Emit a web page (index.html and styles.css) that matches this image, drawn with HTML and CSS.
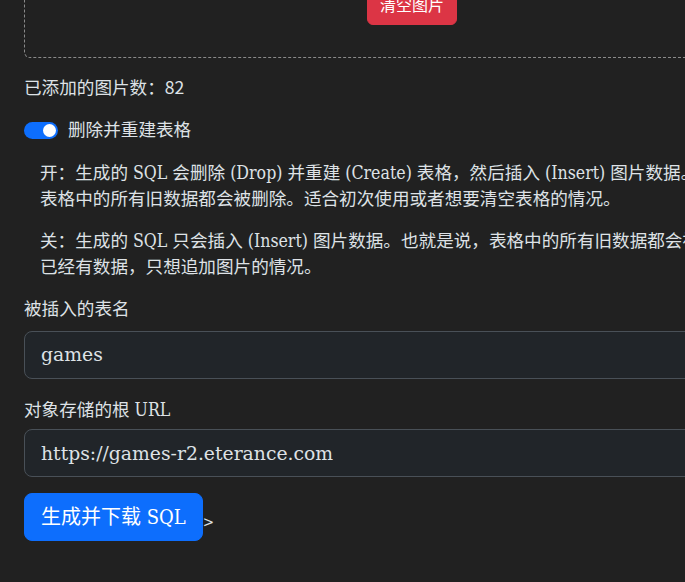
FILE: index.html
```html
<!DOCTYPE html>
<html lang="zh-CN">
<head>
<meta charset="utf-8">
<title>SQL 生成</title>
<link rel="stylesheet" href="styles.css">
</head>
<body>
<div class="page">
  <div class="dropzone">
    <button class="btn btn-danger" type="button">清空图片</button>
  </div>

  <p class="count">已添加的图片数：<span class="num">82</span></p>

  <div class="switch-row">
    <span class="switch"><span class="knob"></span></span>
    <span class="switch-label">删除并重建表格</span>
  </div>

  <div class="help">
    <p>开：生成的 SQL 会删除 (Drop) 并重建 (Create) 表格，然后插入 (Insert) 图片数据。也就是说，<br>表格中的所有旧数据都会被删除。适合初次使用或者想要清空表格的情况。</p>
    <p>关：生成的 SQL 只会插入 (Insert) 图片数据。也就是说，表格中的所有旧数据都会被保留。适合<br>已经有数据，只想追加图片的情况。</p>
  </div>

  <div class="field">
    <label class="field-label">被插入的表名</label>
    <input class="input" type="text" value="games">
  </div>

  <div class="field field-url">
    <label class="field-label">对象存储的根 URL</label>
    <input class="input" type="text" value="https://games-r2.eterance.com">
  </div>

  <div class="actions"><button class="btn btn-primary" type="button">生成并下载 SQL</button><span class="stray">&gt;</span></div>
</div>
</body>
</html>
```

FILE: styles.css
```css
html, body {
  margin: 0;
  padding: 0;
  background: #212121;
  overflow: hidden;
}

body {
  color: #dee2e6;
  font-family: "DejaVu Serif Condensed", "DejaVu Serif", "Noto Sans CJK SC", serif;
  font-stretch: condensed;
  font-size: 17.6px;
  line-height: 1.5;
}

.page {
  width: 860px;
  padding: 0 24px;
  box-sizing: content-box;
}

.dropzone {
  margin-top: -60px;
  height: 118px;
  border: 1px dashed #8a8a8a;
  border-radius: 6px;
  display: flex;
  justify-content: flex-start;
  align-items: flex-start;
  padding-top: 46px;
  padding-left: 342px;
  box-sizing: border-box;
}

.btn {
  font-family: inherit;
  font-stretch: condensed;
  border: 1px solid transparent;
  color: #fff;
  cursor: pointer;
}

.btn-danger {
  background: #dc3545;
  border-color: #dc3545;
  font-size: 16px;
  line-height: 24px;
  padding: 6px 12px;
  border-radius: 6px;
}

.count {
  margin: 16px 0 0;
}

.num {
  font-family: "Noto Sans CJK SC", sans-serif;
}

.switch-row {
  margin-top: 16px;
  display: flex;
  align-items: center;
  gap: 10px;
}

.switch {
  width: 34px;
  height: 17px;
  border-radius: 9px;
  background: #0d6efd;
  display: flex;
  align-items: center;
  justify-content: flex-end;
  padding: 0 2px;
  box-sizing: border-box;
}

.knob {
  width: 13px;
  height: 13px;
  border-radius: 50%;
  background: #fff;
}

.help {
  margin-top: 16px;
  padding-left: 16px;
}

.help p {
  margin: 0 0 15px;
}

.field {
  margin-top: 16px;
}

.field-label {
  display: block;
  margin-bottom: 8px;
}

.field-url {
  margin-top: 18px;
}

.field-url .field-label {
  margin-bottom: 6px;
}

.input {
  display: block;
  width: 100%;
  box-sizing: border-box;
  height: 48px;
  padding: 8px 16px;
  font-family: "DejaVu Serif", "Noto Sans CJK SC", serif;
  font-stretch: normal;
  font-size: 18.8px;
  color: #dee2e6;
  background: #212529;
  border: 1px solid #495057;
  border-radius: 8px;
  outline: none;
}

.actions {
  margin-top: 16px;
}

.btn-primary {
  background: #0d6efd;
  border-color: #0d6efd;
  font-size: 20px;
  line-height: 30px;
  padding: 8px 16px;
  border-radius: 8px;
}

.stray {
  font-size: 15px;
  color: #dee2e6;
  vertical-align: -3px;
}
```
